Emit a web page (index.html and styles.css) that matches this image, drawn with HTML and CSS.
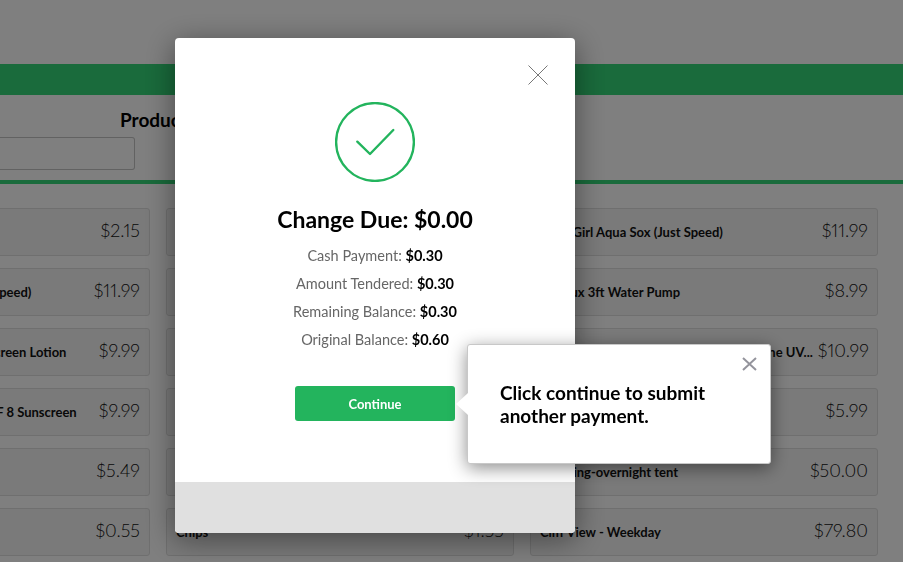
FILE: index.html
```html
<!DOCTYPE html>
<html lang="en">
<head>
<meta charset="utf-8">
<title>Change Due</title>
<link rel="stylesheet" href="styles.css">
</head>
<body>
<div class="page">
  <div class="top-space"></div>
  <div class="green-bar"></div>
  <section class="filter">
    <h2 class="filter-title">Products</h2>
    <div class="filter-input"></div>
  </section>
  <div class="green-line"></div>
  <div class="products">
    <div class="card"><span class="name"></span><span class="price">$2.15</span></div>
    <div class="card"><span class="name">Sunscreen Spray</span><span class="price">$7.99</span></div>
    <div class="card"><span class="name">Little Girl Aqua Sox (Just Speed)</span><span class="price">$11.99</span></div>

    <div class="card"><span class="name">Hydro Kids Boy Aqua Sox (Just Speed)</span><span class="price">$11.99</span></div>
    <div class="card"><span class="name">Beach Towel</span><span class="price">$12.99</span></div>
    <div class="card"><span class="name">Air Flux 3ft Water Pump</span><span class="price">$8.99</span></div>

    <div class="card"><span class="name">Banana Boat Sport SPF 15 Sunscreen Lotion</span><span class="price">$9.99</span></div>
    <div class="card"><span class="name">Lip Balm</span><span class="price">$3.99</span></div>
    <div class="card"><span class="name">Neutrogena Ultra Sheer Sunscreen 5 Zone UV...</span><span class="price">$10.99</span></div>

    <div class="card"><span class="name">Banana Boat Kids Sport Aloe SPF 8 Sunscreen</span><span class="price">$9.99</span></div>
    <div class="card"><span class="name">Flip Flops</span><span class="price">$6.99</span></div>
    <div class="card"><span class="name">Bottled Soda</span><span class="price">$5.99</span></div>

    <div class="card"><span class="name"></span><span class="price">$5.49</span></div>
    <div class="card"><span class="name">Ice Cream</span><span class="price">$2.49</span></div>
    <div class="card"><span class="name">Camping-overnight tent</span><span class="price">$50.00</span></div>

    <div class="card"><span class="name"></span><span class="price">$0.55</span></div>
    <div class="card"><span class="name">Chips</span><span class="price">$1.55</span></div>
    <div class="card"><span class="name">Cliff View - Weekday</span><span class="price">$79.80</span></div>
  </div>
</div>

<div class="overlay">
  <div class="modal">
    <div class="modal-body">
      <button class="modal-close" aria-label="Close">
        <svg width="20" height="20" viewBox="0 0 20 20"><path d="M.5.5 19.5 19.5M19.5.5.5 19.5"/></svg>
      </button>
      <svg class="success" width="80" height="80" viewBox="0 0 80 80">
        <circle cx="40" cy="40" r="38.9"/>
        <path d="M22.3 39.7 35 52 58.3 28"/>
      </svg>
      <h1 class="change">Change Due: $0.00</h1>
      <ul class="lines">
        <li>Cash Payment: <b>$0.30</b></li>
        <li>Amount Tendered: <b>$0.30</b></li>
        <li>Remaining Balance: <b>$0.30</b></li>
        <li>Original Balance: <b>$0.60</b></li>
      </ul>
      <button class="continue">Continue</button>
    </div>
    <div class="modal-foot"></div>
  </div>
  <div class="tip">
    <button class="tip-close" aria-label="Dismiss">
      <svg width="15" height="14" viewBox="0 0 15 14"><path d="M1 1 14 13M14 1 1 13"/></svg>
    </button>
    <p class="tip-text">Click continue to submit another payment.</p>
  </div>
</div>
</body>
</html>
```

FILE: styles.css
```css
* { box-sizing: border-box; }

html, body {
  margin: 0;
  height: 100%;
  overflow: hidden;
  background: #fff;
  font-family: "Lato", "Liberation Sans", sans-serif;
  color: #000;
}

.page { width: 903px; height: 562px; overflow: hidden; }

.top-space { height: 64px; }

.green-bar { height: 31px; background: #34d678; }

.filter { height: 85px; padding-top: 14px; }

.filter-title {
  margin: 0 0 6px 120px;
  height: 22px;
  font-size: 19px;
  line-height: 22px;
  font-weight: 700;
  white-space: nowrap;
}

.filter-input {
  width: 135px;
  height: 33px;
  margin-top: 6px;
  background: #fff;
  border: 1px solid #c4c4c4;
  border-left: 0;
  border-radius: 0 3px 3px 0;
}

.green-line { height: 4px; background: #34d678; }

.products {
  display: grid;
  grid-template-columns: repeat(3, 348px);
  grid-auto-rows: 48px;
  gap: 12px 16px;
  margin: 24px 0 0 -198px;
  width: 1076px;
}

.card {
  display: flex;
  align-items: center;
  justify-content: space-between;
  gap: 5px;
  padding: 0 9px;
  background: #f4f4f4;
  border: 1px solid #dedede;
  border-radius: 3px;
  white-space: nowrap;
}

.name { font-size: 13px; font-weight: 700; color: #111; }

.price {
  font-size: 18px;
  font-weight: 300;
  font-variant-numeric: proportional-nums;
  color: #111;
  margin-top: -4px;
}

.overlay {
  position: fixed;
  inset: 0;
  background: rgba(0, 0, 0, .5);
}

.modal {
  position: absolute;
  left: 175px;
  top: 38px;
  width: 400px;
  height: 495px;
  display: flex;
  flex-direction: column;
  background: #fff;
  border-radius: 4px;
  overflow: hidden;
  box-shadow: 0 6px 30px rgba(0, 0, 0, .45);
}

.modal-body {
  position: relative;
  flex: 1;
  display: flex;
  flex-direction: column;
  align-items: center;
  padding-top: 64px;
}

.modal-close {
  position: absolute;
  top: 27px;
  right: 27px;
  width: 20px;
  height: 20px;
  padding: 0;
  border: 0;
  background: none;
  line-height: 0;
}

.modal-close path { fill: none; stroke: #777; stroke-width: 1; }

.success circle { fill: none; stroke: #23b45d; stroke-width: 2.4; }
.success path { fill: none; stroke: #23b45d; stroke-width: 2.4; stroke-linecap: round; stroke-linejoin: round; }

.change {
  margin: 23px 0 0;
  font-size: 23px;
  line-height: 28px;
  font-weight: 700;
}

.lines {
  list-style: none;
  margin: 9px 0 0;
  padding: 0;
  text-align: center;
  font-size: 14.5px;
  line-height: 28px;
  color: #666;
}

.lines b { color: #000; font-weight: 700; }

.continue {
  width: 160px;
  height: 35px;
  margin-top: 32px;
  border: 0;
  border-radius: 3px;
  background: #23b45d;
  color: #fff;
  font: 700 13px "Lato", "Liberation Sans", sans-serif;
}

.modal-foot { height: 51px; background: #e0e0e0; }

.tip {
  position: absolute;
  left: 467px;
  top: 344px;
  width: 304px;
  height: 120px;
  padding: 36px 32px 0 32px;
  background: #fff;
  border: 1px solid #c8c8c8;
  border-radius: 3px;
  box-shadow: 0 4px 18px rgba(0, 0, 0, .45);
}

.tip::before {
  content: "";
  position: absolute;
  left: -12px;
  top: 48px;
  width: 0;
  height: 0;
  border-style: solid;
  border-width: 11px 12px 11px 0;
  border-color: transparent #fff transparent transparent;
}

.tip-close {
  position: absolute;
  top: 12px;
  right: 13px;
  width: 15px;
  height: 14px;
  padding: 0;
  border: 0;
  background: none;
  line-height: 0;
}

.tip-close path { fill: none; stroke: #94949c; stroke-width: 2; }

.tip-text {
  margin: 0;
  font-size: 19px;
  line-height: 23px;
  font-weight: 700;
}
```
